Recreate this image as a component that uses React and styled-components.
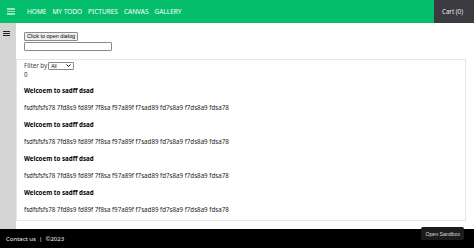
import React, { useState } from "react";
import styled, { createGlobalStyle } from "styled-components";

const GlobalStyle = createGlobalStyle`
  html, body {
    margin: 0;
    padding: 0;
    background: #fff;
    font-family: "Noto Sans", "Open Sans", sans-serif;
  }
`;

const Page = styled.div`
  display: flex;
  flex-direction: column;
  min-height: 100vh;
`;

// Top navigation bar
const Header = styled.header`
  display: flex;
  align-items: stretch;
  height: 23px;
  background: #04be6c;
`;

const MenuButton = styled.div`
  display: flex;
  flex-direction: column;
  justify-content: center;
  gap: 1px;
  width: 8px;
  padding: 0 12px 0 7px;
  span {
    display: block;
    height: 1.5px;
    background: rgba(255, 255, 255, 0.6);
  }
`;

const Nav = styled.nav`
  display: flex;
  align-items: center;
  gap: 6px;
  flex: 1;
`;

const NavLink = styled.a`
  color: #fff;
  font-size: 6.5px;
  text-decoration: none;
`;

const Cart = styled.div`
  display: flex;
  align-items: center;
  padding: 0 11px 0 8px;
  background: #3b3a40;
  color: #e8e8e8;
  font-size: 6.2px;
`;

const Body = styled.div`
  display: flex;
  flex: 1;
`;

const Sidebar = styled.aside`
  width: 16px;
  background: #d4d4d4;
  padding-top: 8px;
  display: flex;
  flex-direction: column;
  align-items: center;
`;

const SideIcon = styled.div`
  display: flex;
  flex-direction: column;
  gap: 1px;
  width: 7px;
  margin-left: -3px;
  span {
    display: block;
    height: 1px;
    background: #222;
  }
`;

const Main = styled.main`
  flex: 1;
  padding: 9px 8px 8px 0;
`;

const Controls = styled.div`
  display: flex;
  flex-direction: column;
  align-items: flex-start;
  gap: 1px;
  padding-left: 8px;
  margin-bottom: 8px;
`;

const DialogButton = styled.button`
  font-family: "Liberation Sans", Arial, sans-serif;
  font-size: 5.5px;
  height: 9px;
  padding: 0 2px;
  border: 1px solid #8a8a8a;
  border-radius: 1px;
  background: #efefef;
  color: #000;
  line-height: 1;
`;

const TextInput = styled.input`
  width: 84px;
  height: 5px;
  border: 1px solid #8a8a8a;
  border-radius: 1px;
  padding: 1px;
`;

const Card = styled.section`
  border: 1px solid #e6e6e6;
  padding: 1px 7px 6px;
  color: #111;
  font-size: 6.2px;
  line-height: 9px;
`;

const FilterRow = styled.div`
  display: flex;
  align-items: center;
  height: 9px;
  color: #444;
`;

const SelectWrap = styled.div`
  position: relative;
  display: flex;
  margin-left: 1px;
`;

const FilterSelect = styled.select`
  appearance: none;
  font-family: "Liberation Sans", Arial, sans-serif;
  font-size: 5px;
  height: 8px;
  width: 26px;
  padding: 0 0 0 2px;
  border: 1px solid #8a8a8a;
  border-radius: 1px;
  background: #fff;
  color: #000;
`;

const Chevron = styled.svg`
  position: absolute;
  right: 3px;
  top: 2.5px;
  width: 5px;
  height: 3px;
  pointer-events: none;
`;

const Count = styled.div`
  color: #333;
`;

const Post = styled.article`
  margin-top: 8px;
  &:first-of-type {
    margin-top: 7px;
  }
`;

const Heading = styled.h4`
  margin: 0 0 8px;
  font-size: 6.2px;
  line-height: 9px;
  font-weight: 700;
  color: #000;
`;

const Text = styled.p`
  margin: 0;
  color: #222;
`;

const Footer = styled.footer`
  display: flex;
  align-items: center;
  height: 19px;
  padding-left: 6px;
  background: #000;
  color: #f2f2f2;
  font-size: 6px;
`;

const SandboxButton = styled.div`
  position: fixed;
  right: 10px;
  bottom: 8px;
  height: 13px;
  padding: 0 4px;
  display: flex;
  align-items: center;
  background: #1c1c1c;
  border-radius: 2px;
  color: #dcdcdc;
  font-family: "Liberation Sans", Arial, sans-serif;
  font-size: 5.2px;
`;

const links = ["HOME", "MY TODO", "PICTURES", "CANVAS", "GALLERY"];
const posts = Array.from({ length: 4 }, () => ({
  title: "Welcoem to sadff dsad",
  body: "fsdfsfsfs78 7fd8s9 fd89f 7f8sa f97a89f f7sad89 fd7s8a9 f7ds8a9 fdsa78",
}));

export default function App() {
  const [filter, setFilter] = useState("All");
  return (
    <Page>
      <GlobalStyle />
      <Header>
        <MenuButton>
          <span />
          <span />
          <span />
        </MenuButton>
        <Nav>
          {links.map((l) => (
            <NavLink key={l} href="#">
              {l}
            </NavLink>
          ))}
        </Nav>
        <Cart>Cart (0)</Cart>
      </Header>
      <Body>
        <Sidebar>
          <SideIcon>
            <span />
            <span />
            <span />
          </SideIcon>
        </Sidebar>
        <Main>
          <Controls>
            <DialogButton>Click to open dialog</DialogButton>
            <TextInput />
          </Controls>
          <Card>
            <FilterRow>
              Filter by
              <SelectWrap>
                <FilterSelect value={filter} onChange={(e) => setFilter(e.target.value)}>
                  <option>All</option>
                </FilterSelect>
                <Chevron viewBox="0 0 5 3">
                  <path d="M0.5 0.5 L2.5 2.5 L4.5 0.5" fill="none" stroke="#000" strokeWidth="1" />
                </Chevron>
              </SelectWrap>
            </FilterRow>
            <Count>0</Count>
            {posts.map((p, i) => (
              <Post key={i}>
                <Heading>{p.title}</Heading>
                <Text>{p.body}</Text>
              </Post>
            ))}
          </Card>
        </Main>
      </Body>
      <Footer>Contact us&nbsp; | &nbsp;©2023</Footer>
      <SandboxButton>Open Sandbox</SandboxButton>
    </Page>
  );
}
